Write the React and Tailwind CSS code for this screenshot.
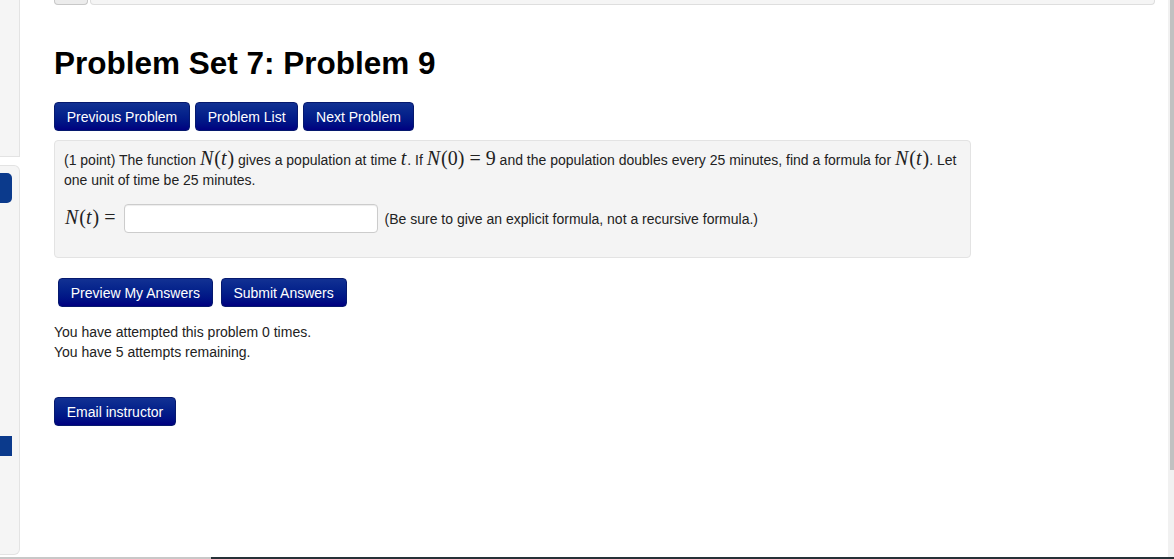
import React from 'react';

const navBtn =
  'h-[29px] px-[11.75px] rounded-[4px] border border-[#06196e] bg-gradient-to-b from-[#123193] to-[#000080] text-white text-[14px] leading-none';

// TeX-like math pieces
const Mi = ({ children }) => (
  <span className="font-['Liberation_Serif',serif] italic text-[20px] leading-[0] pr-[1px]">{children}</span>
);
const Mr = ({ children }) => (
  <span className="font-['Liberation_Serif',serif] text-[20px] leading-[0]">{children}</span>
);
const Eq = () => (
  <span className="font-['Liberation_Serif',serif] text-[20px] leading-[0] mx-[5px]">=</span>
);

const App = () => {
  return (
    <div className="h-[559px] w-[1174px] flex flex-col overflow-hidden bg-white font-['Liberation_Sans',Arial,sans-serif] text-[#222]">
      <div className="flex flex-1 min-h-0">
        {/* left sidebar, mostly cut off */}
        <aside className="w-[20px] flex flex-col shrink-0">
          <div className="h-[157px] bg-[#f5f5f5] border-r border-b border-[#e3e3e3]" />
          <div className="mt-[8px] mb-[2px] flex-1 bg-[#f5f5f5] border-r border-t border-b border-[#e3e3e3] rounded-r-[6px] pt-[7px]">
            <div className="w-[12px] h-[30px] bg-[#0b3a8c] rounded-r-[5px]" />
            <div className="mt-[233px] w-[12px] h-[20px] bg-[#0b3a8c]" />
          </div>
        </aside>

        <main className="flex-1 pl-[34px]">
          <div className="flex gap-[2px] h-[5px] pr-[13px]">
            <div className="w-[34px] bg-[#ececec] border border-t-0 border-[#c8c8c8] rounded-b-[4px]" />
            <div className="flex-1 bg-[#f5f5f5] border border-t-0 border-[#dedede] rounded-b-[4px]" />
          </div>

          <h1 className="mt-[40px] text-[31.5px] leading-[36px] font-bold text-black">Problem Set 7: Problem 9</h1>

          <div className="mt-[21px] flex gap-[5px]">
            <button className={navBtn}>Previous Problem</button>
            <button className={navBtn}>Problem List</button>
            <button className={navBtn}>Next Problem</button>
          </div>

          <div className="mt-[9px] w-[917px] bg-[#f4f4f4] border border-[#e3e3e3] rounded-[4px] pt-[9px] pl-[9px] pr-[9px] pb-[24px] text-[14px] leading-[20px]">
            <p>
              (1 point) The function <Mi>N</Mi><Mr>(</Mr><Mi>t</Mi><Mr>)</Mr> gives a population at time <Mi>t</Mi>. If{' '}
              <Mi>N</Mi><Mr>(0)</Mr><Eq /><Mr>9</Mr> and the population doubles every 25 minutes, find a formula for{' '}
              <Mi>N</Mi><Mr>(</Mr><Mi>t</Mi><Mr>)</Mr>. Let
              <br />
              one unit of time be 25 minutes.
            </p>
            <div className="mt-[14px] flex items-center">
              <span className="pl-[1px] whitespace-nowrap leading-[20px]">
                <Mi>N</Mi><Mr>(</Mr><Mi>t</Mi><Mr>)</Mr><Eq />
              </span>
              <input
                type="text"
                className="ml-[3px] w-[254px] h-[29px] bg-white border border-[#cccccc] rounded-[4px] shadow-[inset_0_1px_1px_rgba(0,0,0,0.075)] outline-none"
              />
              <span className="ml-[7px]">(Be sure to give an explicit formula, not a recursive formula.)</span>
            </div>
          </div>

          <div className="mt-[20px] ml-[4px] flex gap-[8px]">
            <button className={navBtn}>Preview My Answers</button>
            <button className={navBtn}>Submit Answers</button>
          </div>

          <div className="mt-[15px] text-[14px] leading-[20px]">
            <p>You have attempted this problem 0 times.</p>
            <p>You have 5 attempts remaining.</p>
          </div>

          <button className={`mt-[35px] ${navBtn}`}>Email instructor</button>
        </main>

        {/* scrollbar */}
        <div className="w-[6px] shrink-0 bg-[#f1f1f1] flex justify-end">
          <div className="w-[4px] h-[470px] bg-[#c1c1c1]" />
        </div>
      </div>
      <div className="h-[2px] flex shrink-0">
        <div className="w-[211px] bg-[#c8c8c8]" />
        <div className="flex-1 bg-[#263238]" />
      </div>
    </div>
  );
};

export default App;
